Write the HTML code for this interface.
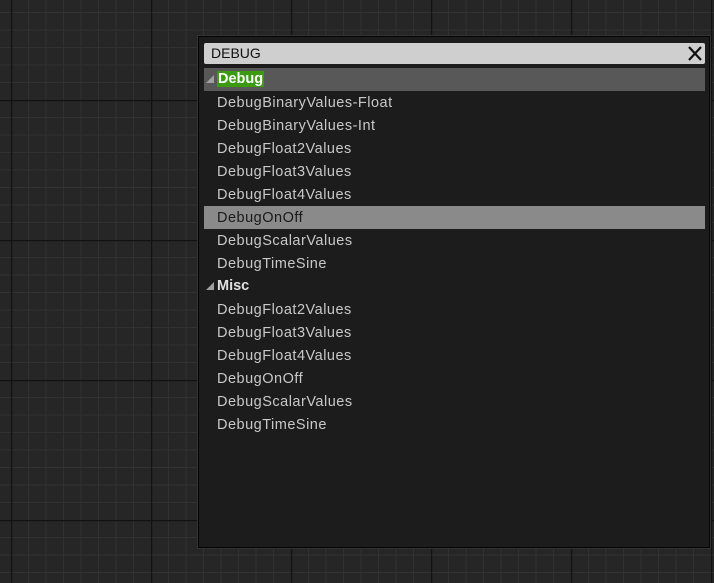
<!DOCTYPE html>
<html><head><style>
body{margin:0;width:714px;height:583px;overflow:hidden;background:#262626;font-family:"Liberation Sans",sans-serif;position:relative}
svg.bg{position:absolute;left:0;top:0}
.panel{position:absolute;left:198px;top:36px;width:510px;height:510px;background:#1c1c1c;border:1px solid #050505;box-shadow:0 0 0 1px #333}
.search{position:absolute;left:5px;top:6px;width:501px;height:21px;background:#cfcfcf;border-radius:2px;color:#111;font-size:14px;line-height:21px;padding-left:7px;box-sizing:border-box}
.x{position:absolute;right:1px;top:2px}
.row{position:absolute;left:5px;width:501px;height:23px;line-height:23px;padding-top:1px;font-size:14.5px;letter-spacing:0.5px;color:#c8c8c8;padding-left:13px;box-sizing:border-box}
.hdr{font-weight:bold;color:#e0e0e0;letter-spacing:0;padding-top:0}
.tri{position:absolute;left:2px;top:7px;width:0;height:0;border-left:8px solid transparent;border-bottom:8px solid #a0a0a0}
.hl{background:#3a9b12;color:#fff;padding:0 1px}
</style></head><body>
<svg class="bg" width="714" height="583">
<defs><pattern id="g" x="11" y="100" width="140" height="140" patternUnits="userSpaceOnUse">
<g stroke="#313131" stroke-width="1">
<path d="M17.5 0V140M35 0V140M52.5 0V140M70 0V140M87.5 0V140M105 0V140M122.5 0V140M0 17.5H140M0 35H140M0 52.5H140M0 70H140M0 87.5H140M0 105H140M0 122.5H140"/>
</g>
<path d="M0.5 0V140M0 0.5H140" stroke="#121212" stroke-width="1.5"/>
</pattern></defs>
<rect width="714" height="583" fill="url(#g)"/>
</svg>
<div class="panel">
<div class="search">DEBUG
<svg class="x" width="18" height="17" viewBox="0 0 18 17"><path d="M3 2L15 15M15 2L3 15" stroke="#111" stroke-width="2.2"/></svg></div>
<div class="row hdr" style="top:31px;background:#585858"><span class="tri"></span><span class="hl">Debug</span></div>
<div class="row" style="top:54px">DebugBinaryValues-Float</div>
<div class="row" style="top:77px">DebugBinaryValues-Int</div>
<div class="row" style="top:100px">DebugFloat2Values</div>
<div class="row" style="top:123px">DebugFloat3Values</div>
<div class="row" style="top:146px">DebugFloat4Values</div>
<div class="row" style="top:169px;background:#8a8a8a;color:#1a1a1a">DebugOnOff</div>
<div class="row" style="top:192px">DebugScalarValues</div>
<div class="row" style="top:215px">DebugTimeSine</div>
<div class="row hdr" style="top:238px"><span class="tri"></span>Misc</div>
<div class="row" style="top:261px">DebugFloat2Values</div>
<div class="row" style="top:284px">DebugFloat3Values</div>
<div class="row" style="top:307px">DebugFloat4Values</div>
<div class="row" style="top:330px">DebugOnOff</div>
<div class="row" style="top:353px">DebugScalarValues</div>
<div class="row" style="top:376px">DebugTimeSine</div>
</div>
</body></html>
